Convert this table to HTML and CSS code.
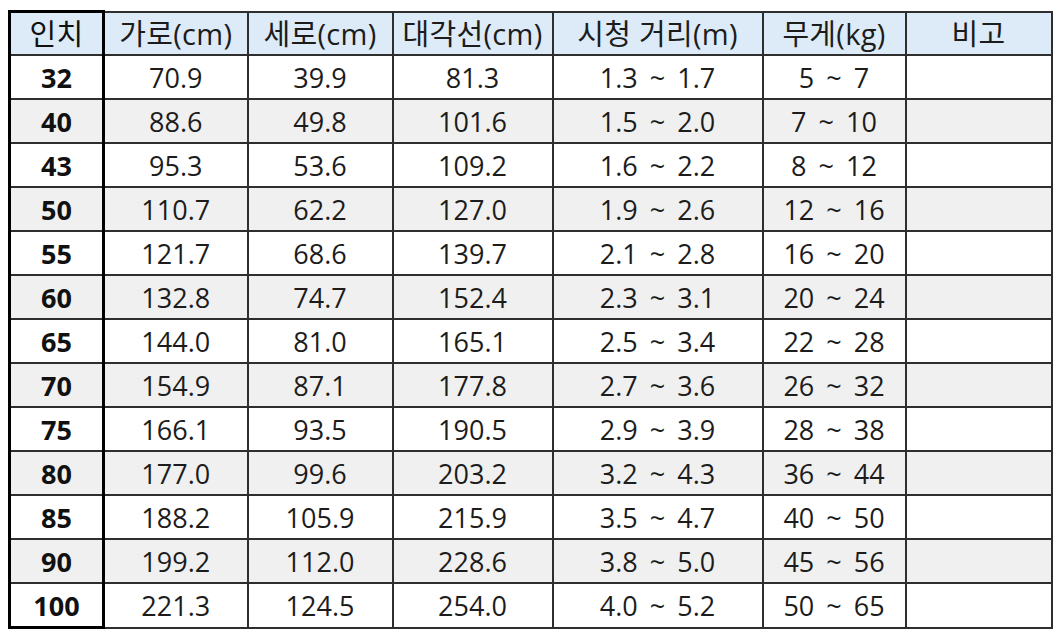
FILE: index.html
```
<!DOCTYPE html>
<html lang="ko">
<head>
<meta charset="utf-8">
<link rel="stylesheet" href="styles.css">
</head>
<body>
<table class="spec">
  <colgroup>
    <col class="c-inch"><col class="c-w"><col class="c-h"><col class="c-d"><col class="c-v"><col class="c-kg"><col class="c-note">
  </colgroup>
  <thead>
    <tr><th class="inch">인치</th><th>가로(cm)</th><th>세로(cm)</th><th>대각선(cm)</th><th>시청 거리(m)</th><th>무게(kg)</th><th>비고</th></tr>
  </thead>
  <tbody>
    <tr><td class="inch">32</td><td>70.9</td><td>39.9</td><td>81.3</td><td>1.3 ~ 1.7</td><td>5 ~ 7</td><td></td></tr>
    <tr><td class="inch">40</td><td>88.6</td><td>49.8</td><td>101.6</td><td>1.5 ~ 2.0</td><td>7 ~ 10</td><td></td></tr>
    <tr><td class="inch">43</td><td>95.3</td><td>53.6</td><td>109.2</td><td>1.6 ~ 2.2</td><td>8 ~ 12</td><td></td></tr>
    <tr><td class="inch">50</td><td>110.7</td><td>62.2</td><td>127.0</td><td>1.9 ~ 2.6</td><td>12 ~ 16</td><td></td></tr>
    <tr><td class="inch">55</td><td>121.7</td><td>68.6</td><td>139.7</td><td>2.1 ~ 2.8</td><td>16 ~ 20</td><td></td></tr>
    <tr><td class="inch">60</td><td>132.8</td><td>74.7</td><td>152.4</td><td>2.3 ~ 3.1</td><td>20 ~ 24</td><td></td></tr>
    <tr><td class="inch">65</td><td>144.0</td><td>81.0</td><td>165.1</td><td>2.5 ~ 3.4</td><td>22 ~ 28</td><td></td></tr>
    <tr><td class="inch">70</td><td>154.9</td><td>87.1</td><td>177.8</td><td>2.7 ~ 3.6</td><td>26 ~ 32</td><td></td></tr>
    <tr><td class="inch">75</td><td>166.1</td><td>93.5</td><td>190.5</td><td>2.9 ~ 3.9</td><td>28 ~ 38</td><td></td></tr>
    <tr><td class="inch">80</td><td>177.0</td><td>99.6</td><td>203.2</td><td>3.2 ~ 4.3</td><td>36 ~ 44</td><td></td></tr>
    <tr><td class="inch">85</td><td>188.2</td><td>105.9</td><td>215.9</td><td>3.5 ~ 4.7</td><td>40 ~ 50</td><td></td></tr>
    <tr><td class="inch">90</td><td>199.2</td><td>112.0</td><td>228.6</td><td>3.8 ~ 5.0</td><td>45 ~ 56</td><td></td></tr>
    <tr class="last"><td class="inch">100</td><td>221.3</td><td>124.5</td><td>254.0</td><td>4.0 ~ 5.2</td><td>50 ~ 65</td><td></td></tr>
  </tbody>
</table>
</body>
</html>
```
FILE: styles.css
```
html, body {
  margin: 0;
  padding: 0;
  background: #ffffff;
}
body {
  padding: 10px 0 0 8px;
  font-family: "Open Sans", "Noto Sans CJK KR", sans-serif;
  color: #1c1c1c;
}
.spec {
  border-collapse: collapse;
  table-layout: fixed;
  width: 1042px;
  border: 2px solid #3a3a3a;
}
.c-inch { width: 94px; }
.c-w { width: 144px; }
.c-h { width: 145px; }
.c-d { width: 160px; }
.c-v { width: 210px; }
.c-kg { width: 143px; }
.c-note { width: 146px; }

.spec th, .spec td {
  border: 2px solid #2e2e2e;
  text-align: center;
  vertical-align: middle;
  padding: 0;
  height: 42px;
  font-size: 27px;
  line-height: 1;
  word-spacing: 5px;
  white-space: nowrap;
}
.spec th {
  background: #dcebf7;
  font-weight: 400;
  height: 41px;
  font-size: 29px;
  word-spacing: 0;
  letter-spacing: 0.3px;
}
.spec tbody tr:nth-child(even) td {
  background: #f0f0f0;
}
.spec .inch {
  border-left: 3px solid #000;
  border-right: 3px solid #000;
  font-weight: 700;
  color: #111;
}
.spec th.inch {
  border-top: 3px solid #000;
  font-weight: 400;
}
.spec tr.last td.inch {
  border-bottom: 3px solid #000;
}
```
